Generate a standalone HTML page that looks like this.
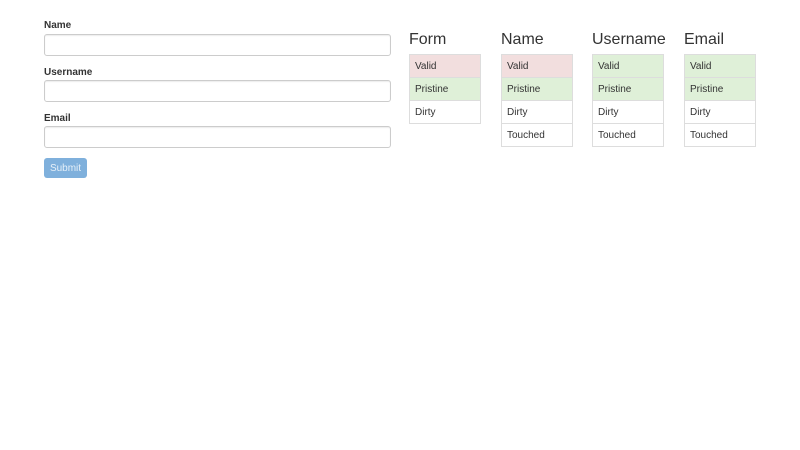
<!DOCTYPE html>
<html><head><style>
body{margin:0;width:800px;height:450px;background:#fff;font-family:"Liberation Sans",sans-serif;color:#333;position:relative;overflow:hidden}
.l{position:absolute;left:44px;font-size:10px;font-weight:bold}
.i{position:absolute;left:44px;width:345px;height:20px;border:1px solid #ccc;border-radius:3px;box-shadow:inset 0 1px 1px rgba(0,0,0,.075)}
.b{position:absolute;left:44px;top:158px;width:43px;height:20px;background:#7fb0dc;border-radius:3px;color:#e6f0f9;font-size:10px;text-align:center;line-height:21px}
.t{position:absolute;top:54px;width:72px}
.h{position:absolute;top:31px;font-size:16px}
.r{height:22px;border:1px solid #ddd;border-top:none;font-size:10px;line-height:24px;padding-left:5px}
.r:first-child{border-top:1px solid #ddd}
.red{background:#f2dede}.grn{background:#dff0d8}
</style></head><body>
<div class="l" style="top:20px">Name</div><div class="i" style="top:34px"></div>
<div class="l" style="top:67px">Username</div><div class="i" style="top:80px"></div>
<div class="l" style="top:113px">Email</div><div class="i" style="top:126px"></div>
<div class="b">Submit</div>
<div class="h" style="left:409px">Form</div>
<div class="t" style="left:409px"><div class="r red">Valid</div><div class="r grn">Pristine</div><div class="r">Dirty</div></div>
<div class="h" style="left:501px">Name</div>
<div class="t" style="left:501px"><div class="r red">Valid</div><div class="r grn">Pristine</div><div class="r">Dirty</div><div class="r">Touched</div></div>
<div class="h" style="left:592px">Username</div>
<div class="t" style="left:592px"><div class="r grn">Valid</div><div class="r grn">Pristine</div><div class="r">Dirty</div><div class="r">Touched</div></div>
<div class="h" style="left:684px">Email</div>
<div class="t" style="left:684px"><div class="r grn">Valid</div><div class="r grn">Pristine</div><div class="r">Dirty</div><div class="r">Touched</div></div>
</body></html>
